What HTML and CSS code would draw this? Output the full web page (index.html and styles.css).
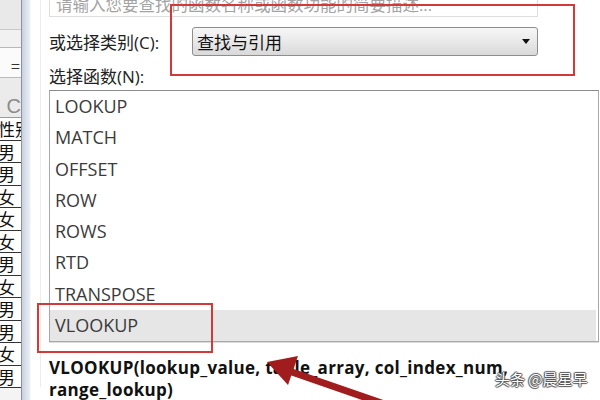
FILE: index.html
```html
<!DOCTYPE html>
<html lang="zh-CN">
<head>
    <meta charset="UTF-8">
    <title>插入函数</title>
    <link rel="stylesheet" href="styles.css">
</head>
<body>
    <div class="sheet">
        <div class="sheet-top"></div>
        <div class="sheet-gap"></div>
        <div class="formula">=</div>
        <div class="col-head">C</div>
        <div class="cell">性别</div>
        <div class="cell">男</div>
        <div class="cell">男</div>
        <div class="cell">女</div>
        <div class="cell">女</div>
        <div class="cell">女</div>
        <div class="cell">男</div>
        <div class="cell">女</div>
        <div class="cell">男</div>
        <div class="cell">男</div>
        <div class="cell">女</div>
        <div class="cell">男</div>
    </div>
    <div class="frame"></div>

    <div class="dialog">
        <div class="panel">
            <div class="search">请输入您要查找的函数名称或函数功能的简要描述...</div>

            <div class="category">
                <span class="label">或选择类别(C):</span>
                <div class="select">
                    <span>查找与引用</span>
                    <span class="caret"></span>
                </div>
            </div>

            <div class="list-label">选择函数(N):</div>
            <ul class="func-list">
                <li>LOOKUP</li>
                <li>MATCH</li>
                <li>OFFSET</li>
                <li>ROW</li>
                <li>ROWS</li>
                <li>RTD</li>
                <li>TRANSPOSE</li>
                <li class="selected">VLOOKUP</li>
            </ul>

            <p class="signature">VLOOKUP(lookup_value, table_array, col_index_num, range_lookup)</p>
        </div>
    </div>

    <!-- annotation marks drawn over the screenshot -->
    <div class="mark mark-category"></div>
    <div class="mark mark-vlookup"></div>
    <svg class="arrow" width="600" height="400" viewBox="0 0 600 400">
        <line x1="390" y1="406" x2="286" y2="370" stroke="#a11d1d" stroke-width="7"/>
        <polygon points="267,362 298,356 288,385" fill="#a11d1d"/>
    </svg>
    <div class="watermark">头条 @晨星早</div>
</body>
</html>
```

FILE: styles.css
```css
body {
    margin: 0;
    width: 600px;
    height: 400px;
    overflow: hidden;
    position: relative;
    display: flex;
    background: #fff;
    font-family: "Open Sans", "Noto Sans CJK SC", sans-serif;
    color: #222;
}

/* spreadsheet peeking out on the left */
.sheet {
    width: 21px;
    flex-shrink: 0;
    overflow: hidden;
    background: #f4f4f4;
    border-right: 1px solid #8b939c;
    font-family: "Noto Sans CJK SC", sans-serif;
}

.sheet-top {
    height: 29px;
    background: #e9e9e9;
    border-bottom: 1px solid #c9c9c9;
}

.sheet-gap {
    height: 17px;
    background: #f1f1f1;
    border-bottom: 1px solid #b8b8b8;
}

.formula {
    height: 29px;
    line-height: 34px;
    text-align: right;
    padding-right: 1px;
    font-size: 16px;
    color: #333;
    background: #fbfbfb;
    border-bottom: 1px solid #bcbcbc;
}

.col-head {
    height: 39px;
    line-height: 56px;
    overflow: hidden;
    text-align: right;
    font-family: "Liberation Sans", sans-serif;
    font-size: 20px;
    color: #8a8a8a;
    background: #ebebeb;
    border-bottom: 1px solid #9a9a9a;
}

.cell {
    height: 21.5px;
    line-height: 21px;
    overflow: hidden;
    white-space: nowrap;
    font-size: 17px;
    text-indent: -2px;
    color: #111;
    background: #fff;
    border-bottom: 1px solid #333;
}

.frame {
    width: 8px;
    flex-shrink: 0;
    background: linear-gradient(to right, #c7d1dd, #dde5ee 60%, #e9eef4);
    border-right: 1px solid #f7f9fb;
}

/* dialog */
.dialog {
    flex: 1;
    padding-left: 9px;
}

.panel {
    height: 100%;
    padding-left: 8px;
    border-left: 1px solid #ececec;
}

.search {
    box-sizing: border-box;
    width: 489px;
    height: 30px;
    margin-top: -13px;
    padding: 6px 0 0 6px;
    line-height: 22px;
    font-size: 16.5px;
    color: #a3a3a3;
    white-space: nowrap;
    overflow: hidden;
    border: 1px solid #dedede;
}

.category {
    display: flex;
    align-items: center;
    margin-top: 10px;
}

.label {
    width: 143px;
    font-size: 17px;
}

.select {
    box-sizing: border-box;
    width: 346px;
    height: 29px;
    display: flex;
    align-items: center;
    justify-content: space-between;
    padding: 0 7px 0 4px;
    font-size: 17px;
    color: #111;
    border: 1px solid #8e8e8e;
    border-radius: 3px;
    background: linear-gradient(#f7f7f7, #e9e9e9 50%, #d9d9d9);
}

.caret {
    width: 0;
    height: 0;
    border-left: 4px solid transparent;
    border-right: 4px solid transparent;
    border-top: 5px solid #111;
}

.list-label {
    margin-top: 10px;
    line-height: 22px;
    font-size: 17px;
}

.func-list {
    box-sizing: border-box;
    list-style: none;
    width: 550px;
    margin: 2px 0 0 0;
    padding: 0 2px 0 0;
    border: 1px solid #a9a9a9;
    border-top-color: #8c8c8c;
    box-shadow: 0 1px 0 #dcdcdc;
}

.func-list li {
    height: 31.25px;
    line-height: 31.25px;
    padding-left: 5px;
    font-size: 18px;
    color: #3b3b3b;
}

.func-list li.selected {
    background: #e6e6e6;
}

.signature {
    width: 540px;
    margin: 15px 0 0 0;
    line-height: 22px;
    font-size: 17px;
    letter-spacing: 0.3px;
    font-weight: bold;
    color: #111;
}

/* red annotations */
.mark {
    position: absolute;
    box-sizing: border-box;
    border: 2px solid #d23a3a;
}

.mark-category {
    left: 170px;
    top: 4px;
    width: 405px;
    height: 72px;
}

.mark-vlookup {
    left: 37px;
    top: 303px;
    width: 176px;
    height: 50px;
}

.arrow {
    position: absolute;
    left: 0;
    top: 0;
}

.watermark {
    position: absolute;
    left: 495px;
    top: 368px;
    font-family: "Noto Sans CJK SC", sans-serif;
    font-size: 15px;
    color: #fff;
    text-shadow: 0 0 1px #444, 1px 0 1px #555, -1px 0 1px #555, 0 1px 1px #555, 0 -1px 1px #555;
}
```
